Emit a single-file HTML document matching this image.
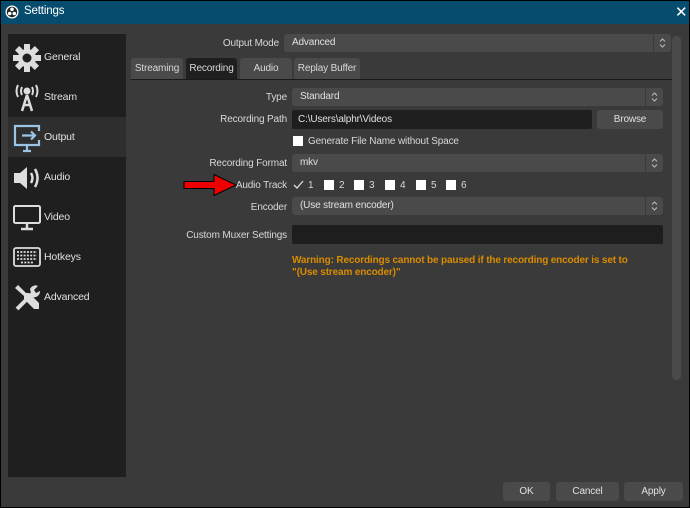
<!DOCTYPE html>
<html><head><meta charset="utf-8"><style>
*{margin:0;padding:0;box-sizing:border-box}
body{width:690px;height:508px;background:#000;font-family:"Liberation Sans",sans-serif;font-size:10px;letter-spacing:-0.15px;color:#d8d8d8;position:relative;overflow:hidden}
.win{position:absolute;left:1px;top:1px;width:688px;height:506px;background:#3a3a3a}
.title{position:absolute;left:0;top:0;width:688px;height:23px;background:#064c6e;color:#fff;font-size:11.5px}
.a{position:absolute;white-space:nowrap}
.side{position:absolute;left:7px;top:33px;width:118px;height:443px;background:#1f1f1f}
.item{position:absolute;left:0;width:118px;height:40px;font-size:10.5px;color:#e0e0e0}
.item span{position:absolute;left:36px;top:14px}
.item svg{position:absolute;left:4px;top:6px}
.sel{background:#2e2e2e}
.combo{position:absolute;background:#4a4a4a;border-radius:3px;height:18px;padding:3px 8px;color:#e0e0e0;white-space:nowrap}
.combo:after{content:"";position:absolute;right:17px;top:0;bottom:0;border-left:1px solid #3a3a3a}
.combo svg{position:absolute;right:4px;top:3px}
.lbl{position:absolute;text-align:right;color:#d8d8d8;white-space:nowrap}
.tab{position:absolute;top:57px;height:21px;background:#4a4a4a;border-radius:3px 3px 0 0;text-align:center;padding-top:5px;white-space:nowrap}
.cb{position:absolute;width:10px;height:10px;background:#fff;top:179px}
.btn{position:absolute;background:#4a4a4a;border-radius:3px;text-align:center;height:19px;padding-top:4px;color:#e0e0e0}
</style></head><body><div class="win">
<div class="title"><svg class="a" style="left:4px;top:4px" width="14" height="14" viewBox="0 0 14 14"><circle cx="7" cy="7" r="6.5" fill="#fff"/><circle cx="7" cy="7" r="5.2" fill="#222"/><circle cx="7" cy="4.3" r="1.8" fill="#fff"/><circle cx="4.7" cy="8.5" r="1.8" fill="#fff"/><circle cx="9.3" cy="8.5" r="1.8" fill="#fff"/></svg><span class="a" style="left:23px;top:4px">Settings</span><span class="a" style="left:674px;top:2px;font-size:15px">✕</span></div>
<div class="side">
<div class="item" style="top:3px"><svg width="30" height="30" viewBox="0 0 30 30"><g fill="#ddd" transform="translate(15 15)"><circle r="9"/><rect x="-3" y="-14" width="6" height="28"/><rect x="-3" y="-14" width="6" height="28" transform="rotate(45)"/><rect x="-3" y="-14" width="6" height="28" transform="rotate(90)"/><rect x="-3" y="-14" width="6" height="28" transform="rotate(135)"/></g><circle cx="15" cy="15" r="4.5" fill="#1f1f1f"/></svg><span>General</span></div>
<div class="item" style="top:43px"><svg width="30" height="30" viewBox="0 0 30 30" fill="none" stroke="#ddd" stroke-width="2"><circle cx="15" cy="8" r="2.5" fill="#ddd"/><path d="M10 4q-2 4 0 8M20 4q2 4 0 8M6 2q-3 6 0 12M24 2q3 6 0 12"/><path d="M15 12L10 28M15 12l5 16M11.5 22h7" stroke-width="2.5"/></svg><span>Stream</span></div>
<div class="item sel" style="top:83px"><svg width="30" height="30" viewBox="0 0 30 30" fill="none" stroke="#9cc4e4" stroke-width="2.2"><path d="M27 8V3H3v19h24v-5"/><path d="M11 28h8M15 22v6"/><path d="M10 12.5h13M19 8.5l4 4-4 4"/></svg><span>Output</span></div>
<div class="item" style="top:123px"><svg width="30" height="30" viewBox="0 0 30 30"><path d="M2 10h6l7-6v22l-7-6H2z" fill="#ddd"/><path d="M19 10q3 5 0 10M23 6q5 9 0 18" stroke="#ddd" stroke-width="2.5" fill="none"/></svg><span>Audio</span></div>
<div class="item" style="top:163px"><svg width="30" height="30" viewBox="0 0 30 30" fill="none" stroke="#ddd" stroke-width="2"><rect x="2" y="3" width="26" height="17" rx="1.5"/><path d="M15 20v5M9 26h12" stroke-width="2.5"/></svg><span>Video</span></div>
<div class="item" style="top:203px"><svg width="30" height="30" viewBox="0 0 30 30" fill="none" stroke="#ddd" stroke-width="1.8"><rect x="2" y="5" width="26" height="18" rx="2"/><path d="M5 9h20M5 12.5h20M5 16h20M9 19.5h12" stroke-dasharray="2 1.3"/></svg><span>Hotkeys</span></div>
<div class="item" style="top:243px"><svg width="30" height="30" viewBox="0 0 30 30"><path d="M5 26L20 11" stroke="#ddd" stroke-width="4"/><path d="M18 6a6 6 0 0 1 8-3l-4 4 2 3 4-2a6 6 0 0 1-8 6z" fill="#ddd"/><path d="M3 5l3-3 8 8 3 0 10 10v6h-5L12 16v-3z" fill="#ddd"/></svg><span>Advanced</span></div>
</div>
<span class="lbl" style="left:180px;width:98px;top:37px">Output Mode</span>
<div class="combo" style="left:283px;top:33px;width:387px">Advanced<svg width="9" height="12" viewBox="0 0 9 12" fill="none" stroke="#bbb"><path d="M2 4.5l2.5-2.5 2.5 2.5M2 7.5l2.5 2.5 2.5-2.5"/></svg></div>
<div class="tab" style="left:130px;width:52px">Streaming</div>
<div class="tab" style="left:185px;width:51px;background:#1f1f1f">Recording</div>
<div class="tab" style="left:239px;width:52px">Audio</div>
<div class="tab" style="left:293px;width:66px">Replay Buffer</div>
<div class="a" style="left:130px;top:78px;width:541px;height:1px;background:#1a1a1a"></div>
<span class="lbl" style="left:180px;width:106px;top:91px">Type</span>
<div class="combo" style="left:291px;top:87px;width:371px">Standard<svg width="9" height="12" viewBox="0 0 9 12" fill="none" stroke="#bbb"><path d="M2 4.5l2.5-2.5 2.5 2.5M2 7.5l2.5 2.5 2.5-2.5"/></svg></div>
<span class="lbl" style="left:180px;width:106px;top:113px">Recording Path</span>
<div class="a" style="left:291px;top:109px;width:300px;height:19px;background:#1e1e1e;border-radius:2px;padding:4px 6px;color:#e0e0e0">C:\Users\alphr\Videos</div>
<div class="btn" style="left:596px;top:109px;width:66px">Browse</div>
<div class="a" style="left:292px;top:135px;width:10px;height:10px;background:#fff"></div>
<span class="a" style="left:307px;top:135px">Generate File Name without Space</span>
<span class="lbl" style="left:180px;width:106px;top:157px">Recording Format</span>
<div class="combo" style="left:291px;top:153px;width:371px">mkv<svg width="9" height="12" viewBox="0 0 9 12" fill="none" stroke="#bbb"><path d="M2 4.5l2.5-2.5 2.5 2.5M2 7.5l2.5 2.5 2.5-2.5"/></svg></div>
<svg class="a" style="left:182px;top:172px" width="56" height="24" viewBox="0 0 56 24"><path d="M1 8.5h30V1.5l22 10.5-22 10.5v-7H1z" fill="#e00" stroke="#000" stroke-width="1"/></svg>
<span class="lbl" style="left:180px;width:106px;top:179px">Audio Track</span>
<svg class="a" style="left:292px;top:179px" width="11" height="10" viewBox="0 0 11 10" fill="none" stroke="#ddd" stroke-width="1.3"><path d="M1 5l3 3 6-7"/></svg><span class="a" style="left:307px;top:179px">1</span>
<div class="cb" style="left:323px"></div><span class="a" style="left:338px;top:179px">2</span>
<div class="cb" style="left:353px"></div><span class="a" style="left:368px;top:179px">3</span>
<div class="cb" style="left:384px"></div><span class="a" style="left:399px;top:179px">4</span>
<div class="cb" style="left:415px"></div><span class="a" style="left:430px;top:179px">5</span>
<div class="cb" style="left:445px"></div><span class="a" style="left:460px;top:179px">6</span>
<span class="lbl" style="left:180px;width:106px;top:201px">Encoder</span>
<div class="combo" style="left:291px;top:196px;width:371px">(Use stream encoder)<svg width="9" height="12" viewBox="0 0 9 12" fill="none" stroke="#bbb"><path d="M2 4.5l2.5-2.5 2.5 2.5M2 7.5l2.5 2.5 2.5-2.5"/></svg></div>
<span class="lbl" style="left:160px;width:126px;top:229px">Custom Muxer Settings</span>
<div class="a" style="left:291px;top:224px;width:371px;height:19px;background:#1e1e1e;border-radius:2px"></div>
<div class="a" style="left:291px;top:254px;width:365px;white-space:normal;color:#d98c00;font-weight:bold;line-height:12px">Warning: Recordings cannot be paused if the recording encoder is set to<br>"(Use stream encoder)"</div>
<div class="a" style="left:671px;top:35px;width:9px;height:344px;background:#4a4a4a;border-radius:4px"></div>
<div class="btn" style="left:502px;top:481px;width:47px">OK</div>
<div class="btn" style="left:555px;top:481px;width:63px">Cancel</div>
<div class="btn" style="left:623px;top:481px;width:59px">Apply</div>
</div></body></html>
